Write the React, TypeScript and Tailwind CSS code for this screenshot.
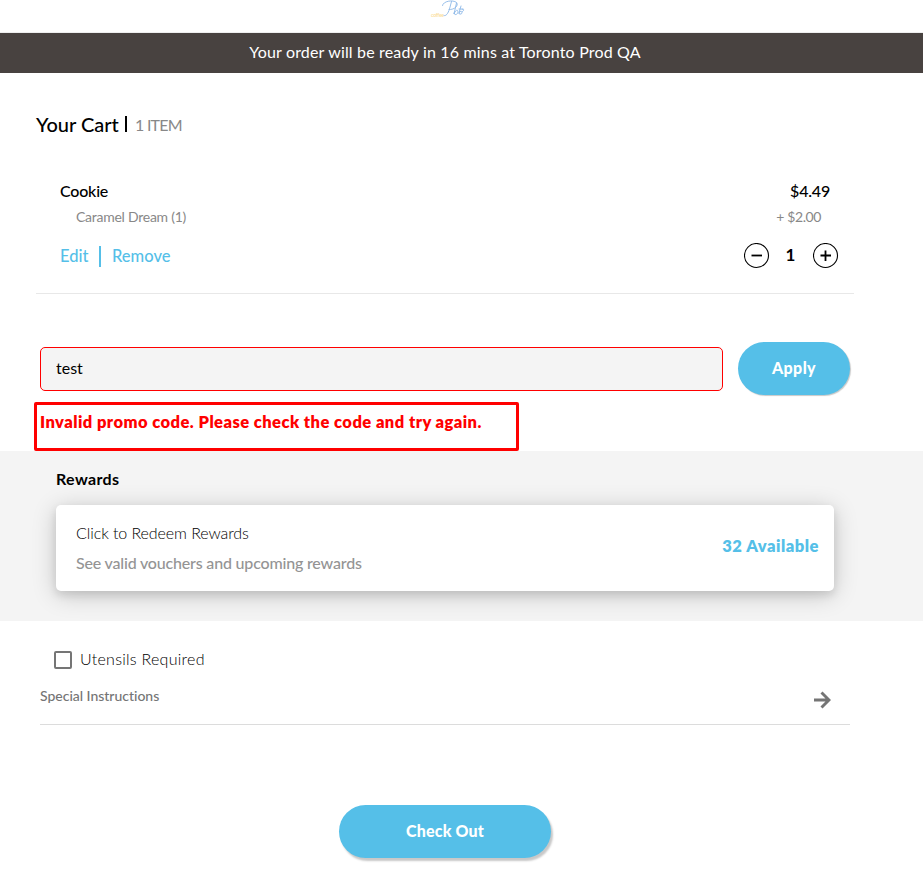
import { useState } from "react";

function Logo() {
  return (
    <svg width="36" height="20" viewBox="0 0 36 20" fill="none" className="block">
      <text x="1" y="16.5" fontSize="5" fontWeight="700" fill="#fbe0a0" textLength="13" fontFamily="Lato, sans-serif">
        coffee
      </text>
      <path
        d="M14 15.500c2 1 4-2 5.500-6.500L21.500 1.500M12.500 5.500C13 1 23 -.5 26.500 2.500c2.500 3-2 7.500-7.500 7M26.500 3l-2.500 11c1.500-4.500 4.500-5 3.800-1.500-.5 2.500-3.800 3-3.800.5M31 6l-2 7c-.2 1.500 2.500 1.500 3 0 .4-2-2.500-2.500-3 .3M32 9.500c2-1 2.500 1 .5 2M29 9h4"
        stroke="#8cb8e8"
        strokeWidth="0.9"
        strokeLinecap="round"
      />
    </svg>
  );
}

function StepButton({ plus = false, onClick }: { plus?: boolean; onClick: () => void }) {
  return (
    <button onClick={onClick} className="block size-[26px]" aria-label={plus ? "Add one" : "Remove one"}>
      <svg width="26" height="26" viewBox="0 0 26 26" fill="none" stroke="#000">
        <circle cx="12.5" cy="12.5" r="12" strokeWidth="1.1" />
        <path d={plus ? "M7.500 12.500h10.500M12.500 7.500v10.500" : "M7.500 12.500h10.500"} strokeWidth="1.8" />
      </svg>
    </button>
  );
}

function CartItem() {
  const [count, setCount] = useState(1);
  return (
    <div className="ml-9 flex h-[122px] w-[818px] justify-between border-b border-[#e8e8e8] pl-6 pr-[15px]">
      <div>
        <p className="mt-[7px] h-6 text-[16px] leading-6 font-medium tracking-[-0.2px] text-black">Cookie</p>
        <p className="mt-1 h-5 pl-4 text-[14px] leading-5 tracking-[-0.26px] text-[#888]">Caramel Dream (1)</p>
        <div className="mt-[17px] flex h-6 items-center text-[16.500px] leading-6 font-medium text-[#55bfe8]">
          <a className="w-[39px]">Edit</a>
          <span className="h-[21px] w-[2px] bg-[#55bfe8]" />
          <a className="ml-[11px]">Remove</a>
        </div>
      </div>
      <div className="flex flex-col items-end">
        <p className="mt-[7px] mr-[9px] h-6 text-[16px] leading-6 font-medium tracking-[-0.2px] text-black">$4.49</p>
        <p className="mt-1 mr-[18px] h-5 text-[14px] leading-5 tracking-[-0.4px] text-[#888]">+ $2.00</p>
        <div className="mt-4 flex items-center">
          <StepButton onClick={() => setCount(Math.max(0, count - 1))} />
          <span className="w-[43px] pr-[2px] pb-[2px] text-center text-[17px] leading-6 font-bold text-black">{count}</span>
          <StepButton plus onClick={() => setCount(count + 1)} />
        </div>
      </div>
    </div>
  );
}

export default function App() {
  return (
    <div className="h-[876px] w-[923px] overflow-hidden bg-white font-['Lato','Liberation_Sans',sans-serif] whitespace-nowrap">
      <header className="h-[33px] border-b border-[#eee] pl-[430px]">
        <Logo />
      </header>
      <div className="flex h-10 w-full justify-center bg-[#484240] pr-[33px] text-[16px] leading-[38px] tracking-[0.17px] text-white">
        Your order will be ready in 16 mins at Toronto Prod QA
      </div>

      <div className="flex h-[99px] items-start pt-[34px] pl-9">
        <h1 className="flex items-center text-[20px] leading-8 font-medium text-black">
          <span className="w-[89px] pb-px">Your Cart</span>
          <span className="h-4 w-[2px] bg-black" />
          <span className="ml-2 pt-[2px] text-[16px] font-normal tracking-[-0.75px] text-[#888]">1 ITEM</span>
        </h1>
      </div>

      <CartItem />

      <div className="mt-12 flex h-[54px] items-start pl-10">
        <input
          defaultValue="test"
          className="mt-[5px] h-11 w-[683px] rounded-[5px] border border-[#ff0000] bg-[#f4f4f4] px-[15px] pb-[3px] text-[16px] text-black outline-none"
        />
        <button className="ml-[15px] h-[53px] w-[112px] rounded-full bg-[#55bfe8] pb-[2px] text-[16px] font-black tracking-[0.4px] text-white shadow-[1px_1px_1px_#c8c8c8]">
          Apply
        </button>
      </div>
      <div className="mt-[6px] ml-[34px] h-[49px] w-[485px] rounded-[2px] border-[3px] border-[#ff0000] pl-[3px] text-[16.500px] leading-[34px] font-extrabold tracking-[0.44px] text-[#ff0000]">
        Invalid promo code. Please check the code and try again.
      </div>

      <section className="h-[170px] bg-[#f4f4f4] px-14 pt-4">
        <h2 className="h-6 text-[16px] leading-6 font-bold tracking-[0.35px] text-black">Rewards</h2>
        <div className="mt-[14px] flex h-[86px] w-[778px] items-center justify-between rounded-[5px] bg-white pr-[15px] pl-5 shadow-[0_4px_8px_0_rgba(0,0,0,0.1),0_4px_24px_0_rgba(0,0,0,0.2)]">
          <div className="pb-px">
            <p className="h-[30px] text-[16px] leading-[30px] font-light tracking-[-0.08px] text-black">
              Click to Redeem Rewards
            </p>
            <p className="h-[30px] text-[16px] leading-[30px] font-medium tracking-[-0.18px] text-[#949494]">
              See valid vouchers and upcoming rewards
            </p>
          </div>
          <a className="pb-[4px] text-[16.500px] font-extrabold tracking-[0.52px] text-[#55bfe8]">32 Available</a>
        </div>
      </section>

      <label className="mt-[27px] ml-[54px] flex h-6 items-center text-[16px] font-light text-black">
        <span className="size-[18px] rounded-[2px] border-2 border-[#757575]" />
        <span className="ml-2 pb-[2px] tracking-[0.27px]">Utensils Required</span>
      </label>
      <div className="ml-10 flex h-[53px] w-[810px] items-start justify-between border-b border-[#dcdcdc] pr-[19px]">
        <span className="mt-3 text-[14px] leading-6 font-medium tracking-[-0.02px] text-[#757575]">
          Special Instructions
        </span>
        <svg
          width="18"
          height="18"
          viewBox="0 0 18 18"
          className="mt-[19px]"
          fill="none"
          stroke="#757575"
          strokeWidth="2.900"
        >
          <path d="M1 9h15M8.500 1.500L16 9l-7.500 7.500" />
        </svg>
      </div>
      <button className="mt-20 ml-[339px] block h-[53px] w-[212px] rounded-full bg-[#55bfe8] pb-[2px] text-[16px] font-black tracking-[0.15px] text-white shadow-[2px_3px_2px_#c8c8c8]">
        Check Out
      </button>
    </div>
  );
}
